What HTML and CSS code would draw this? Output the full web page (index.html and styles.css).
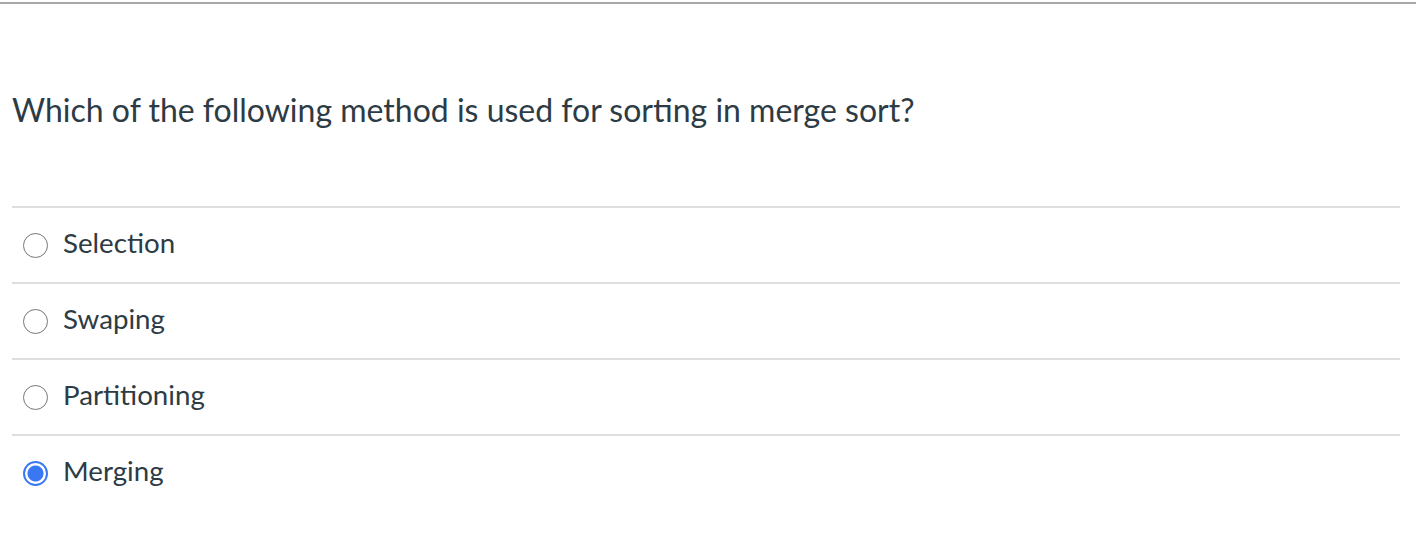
FILE: index.html
```html
<!DOCTYPE html>
<html lang="en">
<head>
<meta charset="utf-8">
<title>Quiz question</title>
<link rel="stylesheet" href="styles.css">
</head>
<body>
<div class="topline"></div>
<main class="question">
  <p class="question-text">Which of the following method is used for sorting in merge sort?</p>
  <ul class="answers">
    <li class="answer"><span class="radio"></span><span class="label">Selection</span></li>
    <li class="answer"><span class="radio"></span><span class="label">Swaping</span></li>
    <li class="answer"><span class="radio"></span><span class="label">Partitioning</span></li>
    <li class="answer"><span class="radio checked"></span><span class="label">Merging</span></li>
  </ul>
</main>
</body>
</html>
```

FILE: styles.css
```css
html, body {
  margin: 0;
  padding: 0;
  background: #ffffff;
}
body {
  font-family: Lato, "Noto Sans", sans-serif;
  color: #2d3b45;
}
.topline {
  margin-top: 2px;
  height: 2px;
  background: #a8a8a8;
}
.question {
  padding: 0 16px 0 12px;
}
.question-text {
  margin: 0;
  padding-top: 86px;
  font-size: 32px;
  line-height: 40px;
  height: 116px;
}
.answers {
  list-style: none;
  margin: 0;
  padding: 0;
}
.answer {
  display: flex;
  align-items: center;
  height: 74px;
  border-top: 2px solid #dedede;
  padding-left: 11px;
}
.radio {
  box-sizing: border-box;
  width: 25px;
  height: 25px;
  border-radius: 50%;
  border: 1.5px solid #767676;
  background: #fff;
  flex: none;
}
.radio.checked {
  border: 2.5px solid #3a78f3;
  background: radial-gradient(circle, #3a78f3 0 7.5px, #fff 8.5px);
}
.label {
  margin-left: 15px;
  margin-bottom: 4px;
  font-size: 27.7px;
  line-height: 32px;
}
```
